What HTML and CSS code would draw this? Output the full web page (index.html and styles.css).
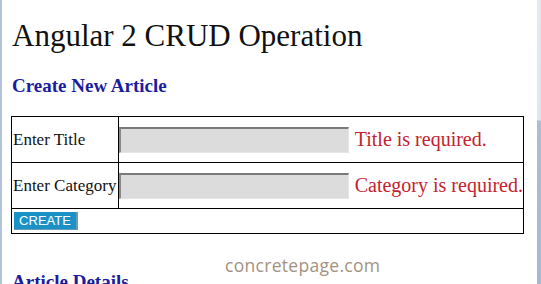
FILE: index.html
```html
<!DOCTYPE html>
<html>
<head>
<meta charset="utf-8">
<title>Angular 2 CRUD Operation</title>
<link rel="stylesheet" href="styles.css">
</head>
<body>
<div class="frame">
  <div class="edge-left"></div>
  <main class="page">
    <h1 class="title">Angular 2 CRUD Operation</h1>
    <h3 class="section">Create New Article</h3>
    <table class="form-table">
      <tr class="field-row">
        <td class="label">Enter Title</td>
        <td class="control"><span class="field"></span><span class="error">Title is required.</span></td>
      </tr>
      <tr class="field-row">
        <td class="label">Enter Category</td>
        <td class="control"><span class="field"></span><span class="error">Category is required.</span></td>
      </tr>
      <tr class="button-row">
        <td class="actions" colspan="2"><button class="create">CREATE</button></td>
      </tr>
    </table>
    <h3 class="section details">Article Details</h3>
    <div class="watermark">concretepage.com</div>
  </main>
  <div class="edge-right"></div>
</div>
</body>
</html>
```
FILE: styles.css
```css
html, body {
  margin: 0;
  padding: 0;
  background: #fff;
  overflow: hidden;
}
.frame {
  display: flex;
  width: 541px;
  height: 284px;
  overflow: hidden;
}
.edge-left {
  width: 2px;
  flex: none;
  background: #b2c3d8;
}
.edge-right {
  width: 4px;
  flex: none;
  background: linear-gradient(to bottom, #e4e9ef 0, #dfe6ee 120px, #a9bed8 121px, #a3b9d6 284px);
}
.page {
  flex: 1;
  position: relative;
  padding-left: 9px;
  font-family: "Liberation Serif", "Times New Roman", serif;
  color: #111;
}
.title {
  margin: 18px 0 0 1px;
  font-size: 31px;
  line-height: 36px;
  font-weight: normal;
}
.section {
  margin: 21px 0 0 1px;
  font-size: 19px;
  line-height: 22px;
  font-weight: bold;
  color: #1c1c9e;
}
.form-table {
  margin-top: 19px;
  border-collapse: collapse;
  width: 513px;
  border: 1px solid #000;
}
.form-table td {
  border: 1px solid #000;
  padding: 0;
}
.field-row td {
  height: 45px;
}
.label {
  width: 105px;
  padding: 0 0 0 1px !important;
  font-size: 17px;
  white-space: nowrap;
}
.control {
  white-space: nowrap;
}
.field {
  display: inline-block;
  vertical-align: middle;
  box-sizing: border-box;
  width: 230px;
  height: 26px;
  background: #dcdcdc;
  border-top: 2px solid #7a7a7a;
  border-left: 2px solid #8a8a8a;
  border-right: 1px solid #e4e4e4;
  border-bottom: 1px solid #e4e4e4;
}
.error {
  display: inline-block;
  vertical-align: middle;
  margin-left: 6px;
  font-size: 20px;
  color: #c4222e;
}
.button-row td {
  height: 24px;
}
.actions {
  padding: 0 0 0 2px !important;
  vertical-align: top;
}
.create {
  display: block;
  margin-top: 3px;
  box-sizing: border-box;
  width: 64px;
  height: 18px;
  padding: 0;
  border: none;
  border-right: 2px solid #6c9cb4;
  border-bottom: 1px solid #6c9cb4;
  background: #1a92c6;
  color: #fff;
  font-family: "Liberation Sans", Arial, sans-serif;
  font-size: 13px;
  line-height: 17px;
}
.details {
  margin-top: 37px;
}
.watermark {
  position: absolute;
  left: 223px;
  top: 253px;
  font-family: "Open Sans", sans-serif;
  font-size: 17.5px;
  line-height: 24px;
  color: #a39282;
  letter-spacing: 0.3px;
}
```
